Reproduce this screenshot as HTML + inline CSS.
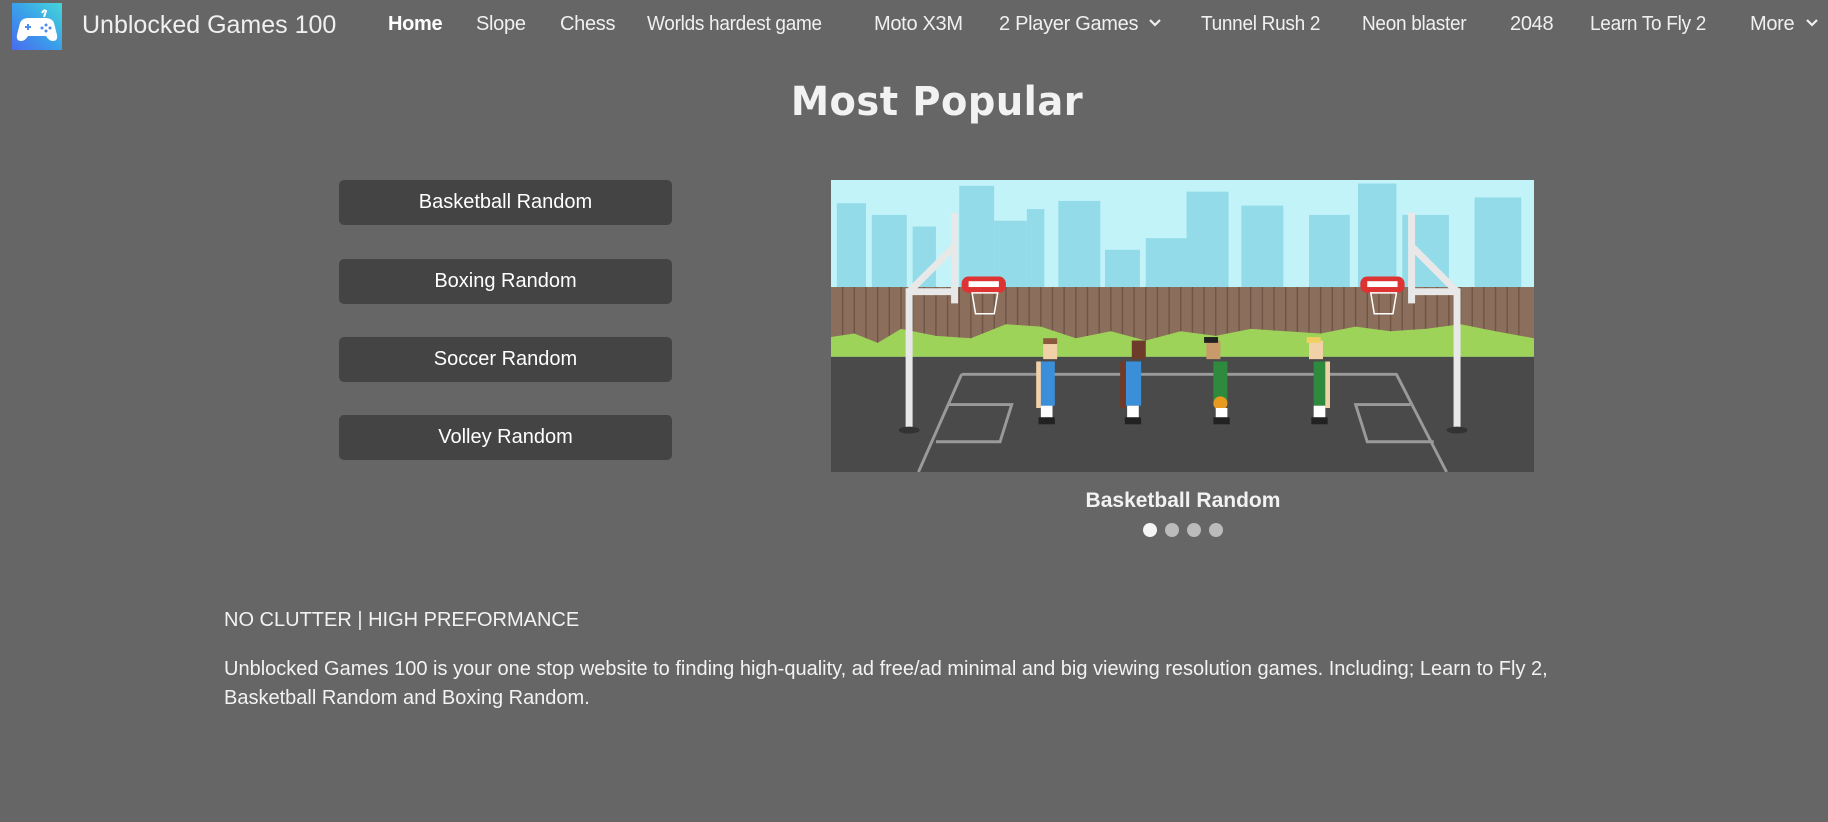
<!DOCTYPE html>
<html><head><meta charset="utf-8">
<style>
*{margin:0;padding:0;box-sizing:border-box}
html,body{width:1828px;height:822px;overflow:hidden;background:#666666;font-family:"Liberation Sans",sans-serif;color:#f2f2f2}
.abs{position:absolute;white-space:nowrap}
.nav{top:10px;font-size:20px;line-height:28px;color:#f0f0f0;letter-spacing:-0.3px}
.btn{position:absolute;left:339px;width:333px;height:45px;background:#444;border-radius:5px;text-align:center;line-height:45px;font-size:20px;color:#fff}
.dot{position:absolute;top:523px;width:14px;height:14px;border-radius:50%;background:#bbb}
</style></head><body>
<svg class="abs" style="left:12px;top:3px" width="50" height="47" viewBox="0 0 50 47">
<defs><linearGradient id="g" x1="0" y1="1" x2="1" y2="0"><stop offset="0" stop-color="#4a6cf0"/><stop offset="0.5" stop-color="#3aa0ea"/><stop offset="1" stop-color="#45d6d8"/></linearGradient></defs>
<rect width="50" height="47" fill="url(#g)"/>
<path d="M30 10 q2 -4 4 -2 l-2 6" stroke="#fff" stroke-width="2" fill="none"/>
<path d="M8 20 q2 -5 8 -5 h18 q6 0 8 5 l3 12 q1 6 -4 6 q-4 0 -7 -5 h-18 q-3 5 -7 5 q-5 0 -4 -6z" fill="#fff"/>
<path d="M13 24 h6 M16 21 v6" stroke="#4a8cf0" stroke-width="2"/>
<circle cx="34" cy="22" r="1.5" fill="#4a8cf0"/><circle cx="38" cy="25" r="1.5" fill="#4a8cf0"/><circle cx="34" cy="28" r="1.5" fill="#4a8cf0"/><circle cx="30" cy="25" r="1.5" fill="#4a8cf0"/>
</svg>
<div class="abs" style="left:82px;top:8px;font-size:25px;line-height:34px;color:#f0f0f0">Unblocked Games 100</div>
<div class="abs nav" style="left:388px;font-weight:bold;color:#fff">Home</div>
<div class="abs nav" style="left:476px">Slope</div>
<div class="abs nav" style="left:560px">Chess</div>
<div class="abs nav" style="left:647px;transform:scaleX(0.95);transform-origin:left">Worlds hardest game</div>
<div class="abs nav" style="left:874px">Moto X3M</div>
<div class="abs nav" style="left:999px">2 Player Games</div>
<svg class="abs" style="left:1148px;top:18px" width="14" height="10"><path d="M2 2 L7 7 L12 2" stroke="#f0f0f0" stroke-width="2.2" fill="none"/></svg>
<div class="abs nav" style="left:1201px;transform:scaleX(0.95);transform-origin:left">Tunnel Rush 2</div>
<div class="abs nav" style="left:1362px;transform:scaleX(0.95);transform-origin:left">Neon blaster</div>
<div class="abs nav" style="left:1510px">2048</div>
<div class="abs nav" style="left:1590px;transform:scaleX(0.95);transform-origin:left">Learn To Fly 2</div>
<div class="abs nav" style="left:1750px">More</div>
<svg class="abs" style="left:1805px;top:18px" width="14" height="10"><path d="M2 2 L7 7 L12 2" stroke="#f0f0f0" stroke-width="2.2" fill="none"/></svg>

<div class="abs" style="left:0;width:1874px;top:75px;text-align:center;font-family:'DejaVu Sans',sans-serif;font-weight:bold;font-size:40px;line-height:54px;color:#f2f2f2;letter-spacing:0.5px;transform:scaleX(0.96);transform-origin:937px 0">Most Popular</div>

<div class="btn" style="top:180px">Basketball Random</div>
<div class="btn" style="top:259px">Boxing Random</div>
<div class="btn" style="top:337px">Soccer Random</div>
<div class="btn" style="top:415px">Volley Random</div>

<svg class="abs" style="left:831px;top:180px" width="703" height="292" viewBox="0 0 603 251" preserveAspectRatio="none">
<rect width="603" height="251" fill="#c2f3f8"/>
<g fill="#93dbe8">
<rect x="5" y="20" width="25" height="80"/><rect x="35" y="30" width="30" height="70"/><rect x="70" y="40" width="20" height="60"/><rect x="110" y="5" width="30" height="95"/><rect x="140" y="35" width="28" height="65"/><rect x="168" y="25" width="15" height="75"/><rect x="195" y="18" width="36" height="82"/><rect x="235" y="60" width="30" height="40"/><rect x="270" y="50" width="40" height="50"/><rect x="305" y="10" width="36" height="90"/><rect x="352" y="22" width="36" height="78"/><rect x="410" y="30" width="35" height="70"/><rect x="452" y="3" width="33" height="97"/><rect x="490" y="30" width="40" height="70"/><rect x="552" y="15" width="40" height="85"/>
</g>
<rect x="0" y="92" width="603" height="55" fill="#8b6e5b"/>
<g stroke="#6f5545" stroke-width="1.2">
<path d="M10 92V145M20 92V145M30 92V145M40 92V145M50 92V145M60 92V145M70 92V145M80 92V145M90 92V145M100 92V145M110 92V145M120 92V145M130 92V145M140 92V145M150 92V145M160 92V145M170 92V145M180 92V145M190 92V145M200 92V145M210 92V145M220 92V145M230 92V145M240 92V145M250 92V145M260 92V145M270 92V145M280 92V145M290 92V145M300 92V145M310 92V145M320 92V145M330 92V145M340 92V145M350 92V145M360 92V145M370 92V145M380 92V145M390 92V145M400 92V145M410 92V145M420 92V145M430 92V145M440 92V145M450 92V145M460 92V145M470 92V145M480 92V145M490 92V145M500 92V145M510 92V145M520 92V145M530 92V145M540 92V145M550 92V145M560 92V145M570 92V145M580 92V145M590 92V145"/>
</g>
<path d="M0 135 L20 132 L40 140 L60 128 L90 134 L120 136 L150 124 L180 126 L210 136 L240 130 L270 138 L300 130 L330 134 L360 128 L390 130 L420 132 L450 126 L480 130 L510 128 L540 124 L570 130 L603 136 V152 H0Z" fill="#9ed35a"/>
<rect x="0" y="152" width="603" height="99" fill="#4a4a4a"/>
<g stroke="#9a9a9a" stroke-width="2.5" fill="none">
<path d="M112 167 H485 L528 251"/><path d="M112 167 L75 251"/>
<path d="M100 193 H155 L145 225 H90"/><path d="M497 193 H450 L460 225 H517"/>
</g>
<g stroke="#e8e8e8" stroke-width="6" fill="none"><path d="M67 215 V96 H106 M67 96 L106 57 V106 M106 28 V57"/><path d="M537 215 V96 H498 M537 96 L498 57 V106 M498 28 V57"/></g>
<ellipse cx="67" cy="215" rx="9" ry="3" fill="#333"/><ellipse cx="537" cy="215" rx="9" ry="3" fill="#333"/>
<rect x="112" y="83" width="38" height="14" rx="6" fill="#d33"/><rect x="118" y="87" width="26" height="5" fill="#fff"/>
<rect x="454" y="83" width="38" height="14" rx="6" fill="#d33"/><rect x="460" y="87" width="26" height="5" fill="#fff"/>
<path d="M121 97 h22 l-3 18 h-16z" fill="none" stroke="#fff" stroke-width="1.3"/>
<path d="M463 97 h22 l-3 18 h-16z" fill="none" stroke="#fff" stroke-width="1.3"/>
<g>
<rect x="182" y="138" width="12" height="16" fill="#f2d1a8"/><rect x="182" y="136" width="12" height="5" fill="#8b5a3c"/>
<rect x="178" y="156" width="14" height="38" fill="#3b8ed8"/><rect x="176" y="156" width="4" height="40" fill="#f2d1a8"/>
<rect x="180" y="194" width="10" height="10" fill="#fff"/><rect x="178" y="204" width="14" height="6" fill="#222"/>
<rect x="258" y="138" width="12" height="16" fill="#6e3a2a"/>
<rect x="252" y="156" width="14" height="38" fill="#3b8ed8"/><rect x="248" y="156" width="5" height="40" fill="#6e3a2a"/>
<rect x="254" y="194" width="10" height="10" fill="#fff"/><rect x="252" y="204" width="14" height="6" fill="#222"/>
<rect x="322" y="138" width="12" height="16" fill="#c99a6a"/><rect x="320" y="135" width="12" height="5" fill="#222"/>
<rect x="328" y="156" width="12" height="38" fill="#2e8b3e"/><circle cx="334" cy="192" r="6" fill="#e89a20"/>
<rect x="330" y="196" width="10" height="8" fill="#fff"/><rect x="328" y="204" width="14" height="6" fill="#222"/>
<rect x="410" y="138" width="12" height="16" fill="#f2d1a8"/><rect x="408" y="135" width="12" height="5" fill="#f0d060"/>
<rect x="414" y="156" width="12" height="38" fill="#2e8b3e"/><rect x="424" y="156" width="4" height="40" fill="#f2d1a8"/>
<rect x="414" y="194" width="10" height="10" fill="#fff"/><rect x="412" y="204" width="14" height="6" fill="#222"/>
</g>
</svg>

<div class="abs" style="left:0;width:2366px;top:487px;text-align:center;font-size:21px;font-weight:bold;line-height:28px;color:#f2f2f2">Basketball Random</div>
<div class="dot" style="left:1143px;background:#f5f5f5"></div>
<div class="dot" style="left:1165px"></div>
<div class="dot" style="left:1187px"></div>
<div class="dot" style="left:1209px"></div>

<div class="abs" style="left:224px;top:607px;font-size:20px;line-height:26px;color:#f2f2f2">NO CLUTTER | HIGH PREFORMANCE</div>
<div class="abs" style="left:224px;top:655px;font-size:20px;line-height:29px;color:#f2f2f2;white-space:normal;width:1420px">Unblocked Games 100 is your one stop website to finding high-quality, ad free/ad minimal and big viewing resolution games. Including; Learn to Fly 2,<br>Basketball Random and Boxing Random.</div>
</body></html>
